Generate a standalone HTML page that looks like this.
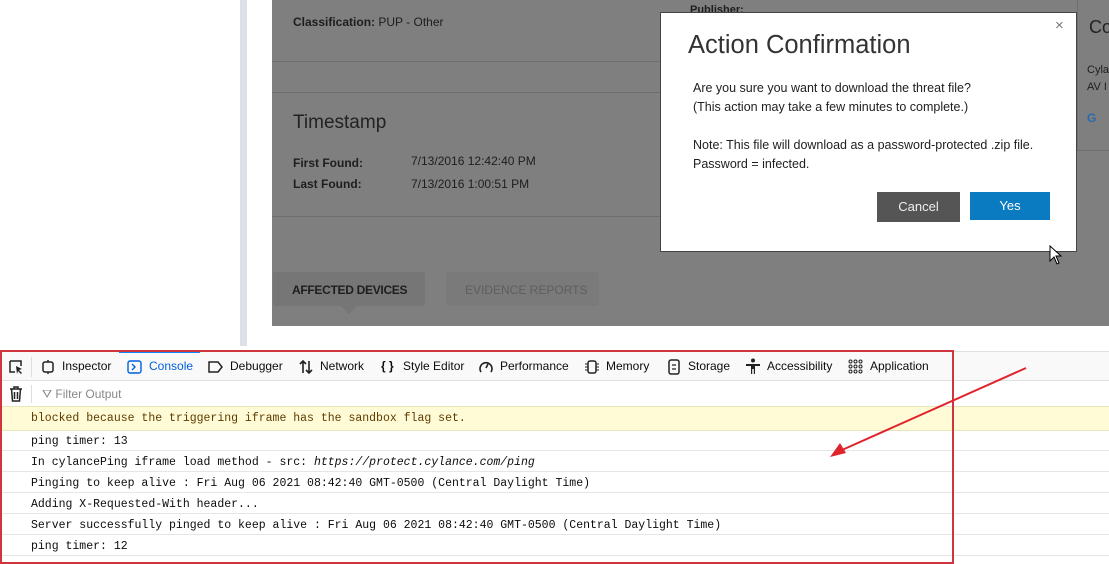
<!DOCTYPE html>
<html><head><meta charset="utf-8"><style>
*{margin:0;padding:0;box-sizing:border-box}
body{width:1109px;height:564px;position:relative;overflow:hidden;background:#fff;font-family:"Liberation Sans",sans-serif}
.a{position:absolute}
.ov{left:272px;top:0;width:837px;height:326px;background:#7f7f7f}
.hl{position:absolute;height:1px;background:#6f6f6f}
.t{position:absolute;font-size:12px;color:#1e1e1e;white-space:nowrap}
.dlg{left:660px;top:12px;width:417px;height:240px;background:#fff;border:1px solid #444}
.tb{left:0;top:351px;width:1109px;height:30px;background:#f9f9fa;border-bottom:1px solid #e0e0e2;border-top:1px solid #e0e0e2}
.tab{position:absolute;top:7px;font-size:12px;color:#0c0c0d;white-space:nowrap}
.row{position:absolute;left:0;width:1109px;height:21px;border-bottom:1px solid #e6e6e6;font-family:"Liberation Mono",monospace;font-size:11.5px;color:#0c0c0d;padding-left:31px;line-height:21px;white-space:nowrap;padding-top:1px}
</style></head><body>
<div class="a" style="left:240px;top:0;width:7px;height:346px;background:#dde0e6"></div>
<div class="a ov"></div>
<div class="hl" style="left:272px;top:61px;width:805px"></div>
<div class="hl" style="left:272px;top:92px;width:805px"></div>
<div class="hl" style="left:272px;top:216px;width:805px"></div>
<div class="a" style="left:1077px;top:0;width:1px;height:150px;background:#6f6f6f"></div>
<div class="hl" style="left:1077px;top:150px;width:32px"></div>
<div class="t" style="left:293px;top:15px;font-size:12px"><b>Classification:</b> PUP - Other</div>
<div class="t" style="left:690px;top:4px;font-size:11px"><b>Publisher:</b></div>
<div class="t" style="left:293px;top:112px;font-size:19px;color:#222">Timestamp</div>
<div class="t" style="left:293px;top:156px"><b>First Found:</b></div>
<div class="t" style="left:411px;top:154px">7/13/2016 12:42:40 PM</div>
<div class="t" style="left:293px;top:177px"><b>Last Found:</b></div>
<div class="t" style="left:411px;top:177px">7/13/2016 1:00:51 PM</div>
<div class="t" style="left:1089px;top:17px;font-size:18px;color:#222">Co</div>
<div class="t" style="left:1087px;top:64px;font-size:11px">Cyla</div>
<div class="t" style="left:1087px;top:81px;font-size:11px">AV I</div>
<div class="t" style="left:1087px;top:111px;font-size:12px;color:#2a6ab0;font-weight:bold">G</div>
<div class="a" style="left:273px;top:272px;width:152px;height:34px;background:#767676;border-radius:3px"></div>
<div class="a" style="left:341px;top:306px;width:0;height:0;border-left:8px solid transparent;border-right:8px solid transparent;border-top:8px solid #767676"></div>
<div class="t" style="left:292px;top:283px;font-weight:bold;letter-spacing:-0.3px">AFFECTED DEVICES</div>
<div class="a" style="left:446px;top:272px;width:153px;height:34px;background:#7a7a7a;border-radius:3px"></div>
<div class="t" style="left:465px;top:283px;color:#5e5e5e">EVIDENCE REPORTS</div>
<div class="a dlg">
<div class="t" style="left:394px;top:4px;font-size:15px;color:#777">×</div>
<div class="t" style="left:27px;top:18px;font-size:25.5px;color:#333">Action Confirmation</div>
<div class="t" style="left:32px;top:68px;font-size:12.5px">Are you sure you want to download the threat file?</div>
<div class="t" style="left:32px;top:87px;font-size:12.5px">(This action may take a few minutes to complete.)</div>
<div class="t" style="left:32px;top:125px;font-size:12.5px">Note: This file will download as a password-protected .zip file.</div>
<div class="t" style="left:32px;top:144px;font-size:12.5px">Password = infected.</div>
<div class="a" style="left:216px;top:179px;width:83px;height:30px;background:#555;color:#eee;font-size:13px;text-align:center;line-height:30px">Cancel</div>
<div class="a" style="left:309px;top:179px;width:80px;height:28px;background:#0a7bc0;color:#fff;font-size:13px;text-align:center;line-height:28px">Yes</div>
</div>
<svg class="a" style="left:1049px;top:245px" width="14" height="20"><path d="M1 1 L1 16 L5 12 L8 19 L10 18 L7 11 L12 11 Z" fill="#fff" stroke="#000" stroke-width="1"/></svg>
<div class="a tb">
<svg class="a" style="left:8px;top:7px" width="16" height="16"><path d="M2 2h11v5M2 2v11h5" fill="none" stroke="#222" stroke-width="1.5"/><path d="M8 7l6 3-3 1 3 3-1 1-3-3-1 3z" fill="#222"/></svg>
<div class="a" style="left:31px;top:5px;width:1px;height:20px;background:#ddd"></div>
<svg class="a" style="left:41px;top:8px" width="14" height="14"><rect x="2" y="2" width="10" height="10" rx="2" fill="none" stroke="#222" stroke-width="1.5"/><path d="M7 0v2M7 12v2" stroke="#222" stroke-width="1.5"/></svg>
<div class="tab" style="left:62px">Inspector</div>
<div class="a" style="left:119px;top:-1px;width:81px;height:2px;background:#0a84ff"></div>
<svg class="a" style="left:127px;top:8px" width="15" height="14"><rect x="1" y="1" width="13" height="12" rx="2" fill="none" stroke="#0060df" stroke-width="1.4"/><path d="M5 4l3 3-3 3" fill="none" stroke="#0060df" stroke-width="1.4"/></svg>
<div class="tab" style="left:149px;color:#0060df">Console</div>
<svg class="a" style="left:207px;top:8px" width="17" height="14"><path d="M2 2h9l4 5-4 5H2z" fill="none" stroke="#222" stroke-width="1.5"/></svg>
<div class="tab" style="left:230px">Debugger</div>
<svg class="a" style="left:298px;top:7px" width="16" height="16"><path d="M5 14V2M2 5l3-3 3 3M11 2v12M8 11l3 3 3-3" fill="none" stroke="#222" stroke-width="1.6"/></svg>
<div class="tab" style="left:320px">Network</div>
<div class="tab" style="left:381px;font-weight:bold">{ }</div>
<div class="tab" style="left:403px">Style Editor</div>
<svg class="a" style="left:478px;top:7px" width="16" height="16"><path d="M3 13A6 6 0 1 1 13 13" fill="none" stroke="#222" stroke-width="1.6"/><path d="M8 9l2-4" stroke="#222" stroke-width="1.6"/></svg>
<div class="tab" style="left:500px">Performance</div>
<svg class="a" style="left:584px;top:7px" width="16" height="16"><rect x="4" y="2" width="8" height="12" rx="2" fill="none" stroke="#222" stroke-width="1.5"/><path d="M1 5h3M1 8h3M1 11h3M12 5h3M12 8h3M12 11h3" stroke="#222"/></svg>
<div class="tab" style="left:606px">Memory</div>
<svg class="a" style="left:667px;top:7px" width="14" height="16"><rect x="2" y="1" width="10" height="14" rx="2" fill="none" stroke="#222" stroke-width="1.5"/><path d="M5 6h4M5 10h4" stroke="#222" stroke-width="1.3"/></svg>
<div class="tab" style="left:688px">Storage</div>
<svg class="a" style="left:745px;top:6px" width="16" height="17"><circle cx="8" cy="2.5" r="2" fill="#222"/><path d="M1 6h14v2H10v8H8.8v-5H7.2v5H6V8H1z" fill="#222"/></svg>
<div class="tab" style="left:767px">Accessibility</div>
<svg class="a" style="left:848px;top:7px" width="15" height="15"><g fill="none" stroke="#222" stroke-width="1"><circle cx="2.5" cy="2.5" r="1.5"/><circle cx="7.5" cy="2.5" r="1.5"/><circle cx="12.5" cy="2.5" r="1.5"/><circle cx="2.5" cy="7.5" r="1.5"/><circle cx="7.5" cy="7.5" r="1.5"/><circle cx="12.5" cy="7.5" r="1.5"/><circle cx="2.5" cy="12.5" r="1.5"/><circle cx="7.5" cy="12.5" r="1.5"/><circle cx="12.5" cy="12.5" r="1.5"/></g></svg>
<div class="tab" style="left:870px">Application</div>
</div>
<svg class="a" style="left:9px;top:386px" width="14" height="16"><path d="M1 3h12M5 3V1h4v2M2.5 3l1 12h7l1-12M5.5 6v7M8.5 6v7" fill="none" stroke="#222" stroke-width="1.5"/></svg>
<div class="a" style="left:31px;top:385px;width:1px;height:18px;background:#ddd"></div>
<div class="t" style="left:42px;top:387px;color:#888;font-size:12px">⛛ Filter Output</div>
<div class="a" style="left:0;top:406px;width:1109px;height:25px;background:#fffbd6;border-top:1px solid #e8e4bc;border-bottom:1px solid #e8e4bc;overflow:hidden"></div>
<div class="a" style="left:31px;top:412px;font-family:'Liberation Mono',monospace;font-size:11.5px;color:#5c3b00;white-space:nowrap">blocked because the triggering iframe has the sandbox flag set.</div>
<div class="row" style="top:430px">ping timer: 13</div>
<div class="row" style="top:451px">In cylancePing iframe load method - src: <i>https://protect.cylance.com/ping</i></div>
<div class="row" style="top:472px">Pinging to keep alive : Fri Aug 06 2021 08:42:40 GMT-0500 (Central Daylight Time)</div>
<div class="row" style="top:493px">Adding X-Requested-With header...</div>
<div class="row" style="top:514px">Server successfully pinged to keep alive : Fri Aug 06 2021 08:42:40 GMT-0500 (Central Daylight Time)</div>
<div class="row" style="top:535px">ping timer: 12</div>
<div class="a" style="left:0;top:350px;width:954px;height:214px;border:2px solid #d0343c"></div>
<svg class="a" style="left:820px;top:360px" width="215" height="100"><path d="M206 8L22 90" stroke="#e0242c" stroke-width="2"/><path d="M10 97l10-14 6 10z" fill="#e0242c"/></svg>
</body></html>
